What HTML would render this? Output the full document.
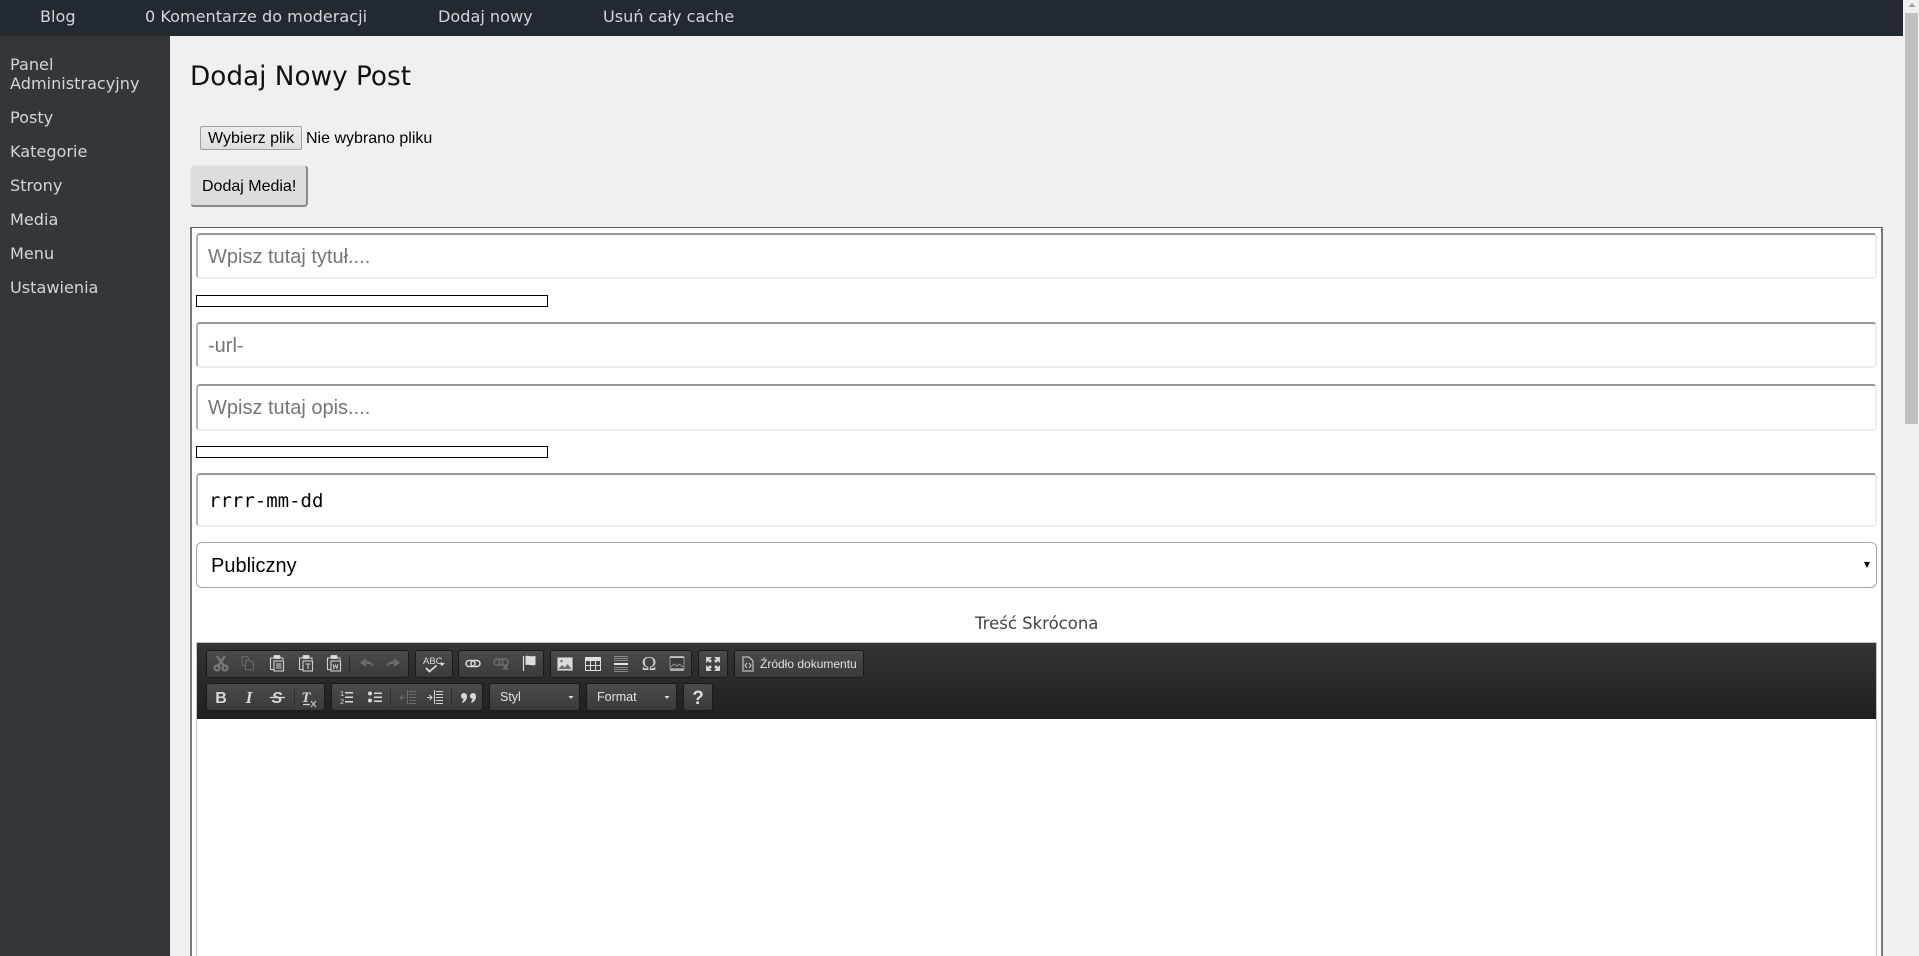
<!DOCTYPE html>
<html lang="pl"><head><meta charset="utf-8"><title>Dodaj Nowy Post</title>
<style>
html,body{margin:0;padding:0;width:1919px;height:956px;overflow:hidden;background:#f0f0f0}
body{position:relative;font-family:"Liberation Sans",sans-serif}
.a{position:absolute;box-sizing:border-box}
.t{position:absolute;white-space:nowrap}
.v{font-family:"DejaVu Sans",sans-serif;font-size:16.100px;line-height:20px;color:#d4d6d8}
.inp{position:absolute;box-sizing:border-box;left:196px;width:1681px;background:#fff;border-style:solid;border-width:2px 2px 2px 2px;border-color:#979797 #ececec #ececec #b0b0b0;border-radius:4px;font-size:20px;color:#757575;padding-left:10px}
.prog{position:absolute;box-sizing:border-box;left:196px;width:352px;height:12px;background:#fff;border:1px solid #000}
</style></head><body>
<div class="a" style="left:0;top:0;width:1903px;height:36px;background:#22292f"></div>
<div class="t v" style="left:40px;top:7px">Blog</div>
<div class="t v" style="left:145px;top:7px">0 Komentarze do moderacji</div>
<div class="t v" style="left:438px;top:7px">Dodaj nowy</div>
<div class="t v" style="left:603px;top:7px">Usuń cały cache</div>
<div class="a" style="left:1905px;top:0;width:14px;height:956px;background:#f0f0f0"></div>
<div class="a" style="left:1905px;top:13px;width:13px;height:411px;background:#c0c0c0"></div>
<div class="a" style="left:1908px;top:3px;width:0;height:0;border-left:4px solid transparent;border-right:4px solid transparent;border-bottom:4px solid #a3a3a3"></div>

<div class="a" style="left:0;top:36px;width:170px;height:920px;background:#33363a"></div>
<div class="t v" style="left:10px;top:55px;line-height:19px">Panel<br>Administracyjny</div>
<div class="t v" style="left:10px;top:108px">Posty</div>
<div class="t v" style="left:10px;top:142px">Kategorie</div>
<div class="t v" style="left:10px;top:176px">Strony</div>
<div class="t v" style="left:10px;top:210px">Media</div>
<div class="t v" style="left:10px;top:244px">Menu</div>
<div class="t v" style="left:10px;top:278px">Ustawienia</div>

<div class="t" style="left:190px;top:59px;font-family:'DejaVu Sans',sans-serif;font-size:26.300px;line-height:36px;color:#111">Dodaj Nowy Post</div>
<div class="a" style="left:200px;top:126px;width:102px;height:24px;background:linear-gradient(#ededed,#dedede);border:1px solid #a0a0a0;border-radius:2px"></div>
<div class="t" style="left:208px;top:129px;font-size:16px;line-height:20px;color:#000">Wybierz plik</div>
<div class="t" style="left:306px;top:129px;font-size:16px;line-height:20px;color:#000">Nie wybrano pliku</div>
<div class="a" style="left:190px;top:165px;width:118px;height:42px;background:#ddd;border-radius:4px;border-right:2px solid #8a8a8a;border-bottom:2px solid #8a8a8a;border-top:1px solid #e8e8e8;border-left:1px solid #e8e8e8"></div>
<div class="t" style="left:202px;top:177px;font-size:16px;line-height:20px;color:#000">Dodaj Media!</div>

<div class="a" style="left:190px;top:227px;width:1693px;height:740px;background:#fff;border:1px solid #6a6a6a;border-width:1px 2px 1px 2px;border-color:#5f5f5f #7a7a7a #7a7a7a #7a7a7a"></div>
<div class="inp" style="top:233px;height:46px;line-height:44px">Wpisz tutaj tytuł....</div>
<div class="prog" style="top:295px"></div>
<div class="inp" style="top:322px;height:46px;line-height:44px">-url-</div>
<div class="inp" style="top:384px;height:47px;line-height:45px">Wpisz tutaj opis....</div>
<div class="prog" style="top:446px"></div>
<div class="inp" style="top:473px;height:54px;line-height:52px;color:#000;font-family:'DejaVu Sans Mono',monospace;font-size:19px;padding-left:11px">rrrr-mm-dd</div>
<div class="a" style="left:196px;top:542px;width:1681px;height:46px;background:#fff;border:1px solid #a6a6a6;border-radius:6px"></div>
<div class="t" style="left:211px;top:554px;font-size:20px;line-height:24px;color:#000">Publiczny</div>
<div class="a" style="left:1864px;top:562px;width:0;height:0;border-left:3px solid transparent;border-right:3px solid transparent;border-top:6px solid #000"></div>
<div class="t" style="left:975px;top:614px;font-family:'DejaVu Sans',sans-serif;font-size:16.500px;line-height:20px;color:#444">Treść Skrócona</div>

<div class="a" style="left:196px;top:642px;width:1681px;height:330px;background:#fff;border:1px solid #c4c4c4"></div>

<svg class="a" style="left:0;top:0" width="1919" height="956" viewBox="0 0 1919 956" xmlns="http://www.w3.org/2000/svg">
<defs>
<linearGradient id="tb" x1="0" y1="0" x2="0" y2="1"><stop offset="0" stop-color="#343434"/><stop offset="1" stop-color="#1f1f1f"/></linearGradient>
<linearGradient id="gp" x1="0" y1="0" x2="0" y2="1"><stop offset="0" stop-color="#4b4b4b"/><stop offset="1" stop-color="#3a3a3a"/></linearGradient>
</defs>
<rect x="197" y="643" width="1679" height="76" fill="url(#tb)"/>
<g fill="url(#gp)" stroke="#1a1a1a" stroke-width="1">
<rect x="206.500" y="650.500" width="202" height="27" rx="2.500"/>
<rect x="415.500" y="650.500" width="37" height="27" rx="2.500"/>
<rect x="458.500" y="650.500" width="85" height="27" rx="2.500"/>
<rect x="550.500" y="650.500" width="141" height="27" rx="2.500"/>
<rect x="698.500" y="650.500" width="29" height="27" rx="2.500"/>
<rect x="734.500" y="650.500" width="129" height="27" rx="2.500"/>
<rect x="206.500" y="683.500" width="118" height="27" rx="2.500"/>
<rect x="331.500" y="683.500" width="151" height="27" rx="2.500"/>
<rect x="489.500" y="683.500" width="90" height="27" rx="2.500"/>
<rect x="586.500" y="683.500" width="90" height="27" rx="2.500"/>
<rect x="683.500" y="683.500" width="29" height="27" rx="2.500"/>
</g>
<g stroke="#2c2c2c" stroke-width="1"><path d="M349.500 656v16M294.500 689v16M390.500 689v16M451.500 689v16"/></g>

<!-- cut -->
<g transform="translate(221,663)" fill="none" stroke="#777" stroke-width="2.300"><circle cx="-4" cy="5" r="2.500"/><circle cx="4" cy="5" r="2.500"/><path d="M-3 3L4-7M3 3L-4-7"/></g>
<!-- copy -->
<g transform="translate(248,663)" fill="none" stroke="#6a6a6a" stroke-width="1"><path d="M-1-6.500h-5v9h3"/><path d="M-2.500-2.500h5l3 3v6.500h-8z"/><path d="M-1-6.500l2 3"/></g>
<!-- paste -->
<g transform="translate(277,663)" fill="none" stroke="#d0d0d0" stroke-width="1.100"><path d="M-3-5h-3.500v11.500h3"/><path d="M3-5h3v2"/><rect x="-3" y="-7.500" width="6" height="3" fill="#dcdcdc" rx="1"/><rect x="-3" y="-2" width="9.500" height="10"/><path d="M-1 1h5.500M-1 3h5.500M-1 5h5.500"/></g>
<g transform="translate(306,663)" fill="none" stroke="#d0d0d0" stroke-width="1.100"><path d="M-3-5h-3.500v11.500h3"/><path d="M3-5h3v2"/><rect x="-3" y="-7.500" width="6" height="3" fill="#dcdcdc" rx="1"/><rect x="-3" y="-2" width="9.500" height="10"/><path d="M-.500 1h5M2 1v5"/></g>
<g transform="translate(334,663)" fill="none" stroke="#d0d0d0" stroke-width="1.100"><path d="M-3-5h-3.500v11.500h3"/><path d="M3-5h3v2"/><rect x="-3" y="-7.500" width="6" height="3" fill="#dcdcdc" rx="1"/><rect x="-3" y="-2" width="9.500" height="10"/><path d="M-1 1l1 4.500 1.500-3.500 1.500 3.500 1-4.500" stroke-width=".9"/></g>
<!-- undo redo -->
<path transform="translate(367,663)" d="M-7 0L-1-5v3c4 0 7 2 8 6-2-2-4-3-8-3v3z" fill="#6a6a6a"/>
<path transform="translate(393,663) scale(-1,1)" d="M-7 0L-1-5v3c4 0 7 2 8 6-2-2-4-3-8-3v3z" fill="#6a6a6a"/>
<!-- abc -->
<text x="423" y="664" font-family="'Liberation Sans',sans-serif" font-size="9.500" fill="#dcdcdc">ABC</text>
<path d="M426 668l3.500 3.500 7-6" fill="none" stroke="#dcdcdc" stroke-width="1.800"/>
<path d="M439 663h6l-3 3z" fill="#dcdcdc"/>
<!-- link -->
<g fill="none" stroke="#d8d8d8" stroke-width="1.500"><rect x="466" y="660.500" width="9" height="6" rx="3"/><rect x="471" y="660.500" width="9" height="6" rx="3"/></g>
<g fill="none" stroke="#6c6c6c" stroke-width="1.500"><rect x="494" y="659" width="9" height="6" rx="3"/><rect x="499" y="659" width="9" height="6" rx="3"/><path d="M503 665l5 5M508 665l-5 5"/></g>
<!-- flag -->
<path d="M523.500 656v15" stroke="#dcdcdc" stroke-width="1.200"/><path d="M525.500 656c3-1 5 1 10 0v9c-5 1-7-1-10 0z" fill="#dcdcdc"/>
<!-- image -->
<g transform="translate(565,664)"><rect x="-7.500" y="-6.500" width="15" height="13" fill="#ddd" stroke="#999" stroke-width=".8"/><path d="M-6.500 5l3.500-4 3 2.500 2.500-3.500 4 5z" fill="#6c6c6c"/><circle cx="-3.500" cy="-3" r="1.300" fill="#777"/></g>
<!-- table -->
<g transform="translate(593,664)"><rect x="-8" y="-7" width="16" height="4" fill="#ddd"/><path d="M-7.500-3v9.500h15v-9.500M-2.500-3v9.500M2.500-3v9.500M-7.500 1.500h15" fill="none" stroke="#ddd"/></g>
<!-- hr -->
<g stroke="#888" stroke-width="1"><path d="M614 656.500h14M614 658.500h14M614 660.500h14M614 667.500h14M614 669.500h14M614 671.500h14"/></g><path d="M614 663h14v2h-14z" fill="#e4e4e4"/>
<!-- omega -->
<text x="649" y="670" text-anchor="middle" font-family="'Liberation Serif',serif" font-size="20" fill="#d0d0d0">Ω</text>
<!-- iframe -->
<g transform="translate(677,664)"><rect x="-7" y="-6.500" width="14" height="11" fill="#3a3a3a" stroke="#aaa" stroke-width=".8"/><path d="M-7-7h14M-7 6h14" stroke="#eee" stroke-width="1.300"/><path d="M-6 3l3-3 3 2 2-2 4 3" fill="none" stroke="#999"/></g>
<!-- maximize -->
<g transform="translate(713,664)" fill="#d4d4d4"><path d="M-7-7h6l-2 2 2 2-2 2-2-2-2 2z"/><path d="M7-7h-6l2 2-2 2 2 2 2-2 2 2z"/><path d="M-7 7h6l-2-2 2-2-2-2-2 2-2-2z"/><path d="M7 7h-6l2-2-2-2 2-2 2 2 2-2z"/></g>
<!-- source -->
<g transform="translate(748,664)" fill="none" stroke="#dcdcdc" stroke-width="1"><path d="M-5-7h6l4 4v10h-10z"/><path d="M-1-1l-2 2.500 2 2.500M1-1l2 2.500-2 2.500"/></g>
<text x="760" y="668" font-family="'Liberation Sans',sans-serif" font-size="12" fill="#e2e2e2">Źródło dokumentu</text>

<!-- row 2 -->
<text x="221" y="703" text-anchor="middle" font-family="'Liberation Sans',sans-serif" font-weight="bold" font-size="16" fill="#d8d8d8">B</text>
<text x="249" y="703" text-anchor="middle" font-family="'Liberation Serif',serif" font-weight="bold" font-style="italic" font-size="17" fill="#d8d8d8">I</text>
<text x="277" y="703" text-anchor="middle" font-family="'Liberation Sans',sans-serif" font-weight="bold" font-style="italic" font-size="16" fill="#d8d8d8">S</text>
<path d="M270 697.500h15" stroke="#d8d8d8" stroke-width="1.300"/>
<text x="306" y="702" text-anchor="middle" font-family="'Liberation Serif',serif" font-weight="bold" font-style="italic" font-size="15" fill="#d8d8d8">T</text>
<path d="M303 704.500h7" stroke="#d8d8d8" stroke-width="1.200"/><path d="M311 701l5 6M316 701l-5 6" stroke="#bbb" stroke-width="1.300"/>
<!-- ol -->
<g fill="#d8d8d8"><text x="340" y="696" font-family="'Liberation Sans',sans-serif" font-size="7.500">1</text><text x="340" y="704" font-family="'Liberation Sans',sans-serif" font-size="7.500">2</text><path d="M345 692h8v1.500h-8zM345 696.500h8v1.500h-8zM345 701h8v1.500h-8z"/></g>
<!-- ul -->
<g fill="#d8d8d8"><circle cx="370" cy="693.500" r="2"/><circle cx="370" cy="700.500" r="2"/><path d="M374 692.500h8v1.500h-8zM374 696.500h8v1.500h-8zM374 700.500h8v1.500h-8z"/></g>
<!-- outdent / indent -->
<g stroke="#6c6c6c" fill="none"><path d="M407.500 690v14M409 691.500h7M409 694.500h7M409 697.500h7M409 700.500h7M409 703.500h7M400 697.500h5M402.500 695l-2.500 2.500 2.500 2.500"/></g>
<g stroke="#d8d8d8" fill="none"><path d="M434.500 690v14M436 691.500h7M436 694.500h7M436 697.500h7M436 700.500h7M436 703.500h7M427 697.500h5M429.500 695l2.500 2.500-2.500 2.500"/></g>
<!-- quote -->
<g fill="#d8d8d8"><circle cx="464" cy="696" r="3"/><path d="M467 696c0 4-2 6-5 7l1-3z"/><circle cx="473" cy="696" r="3"/><path d="M476 696c0 4-2 6-5 7l1-3z"/></g>
<!-- combos -->
<text x="500" y="701" font-family="'Liberation Sans',sans-serif" font-size="12.500" fill="#e2e2e2">Styl</text>
<path d="M568.500 696h5l-2.500 3z" fill="#dcdcdc"/>
<text x="597" y="701" font-family="'Liberation Sans',sans-serif" font-size="12.500" fill="#e2e2e2">Format</text>
<path d="M664.500 696h5l-2.500 3z" fill="#dcdcdc"/>
<text x="698" y="704" text-anchor="middle" font-family="'Liberation Sans',sans-serif" font-weight="bold" font-size="19" fill="#dcdcdc">?</text>
</svg>
</body></html>
